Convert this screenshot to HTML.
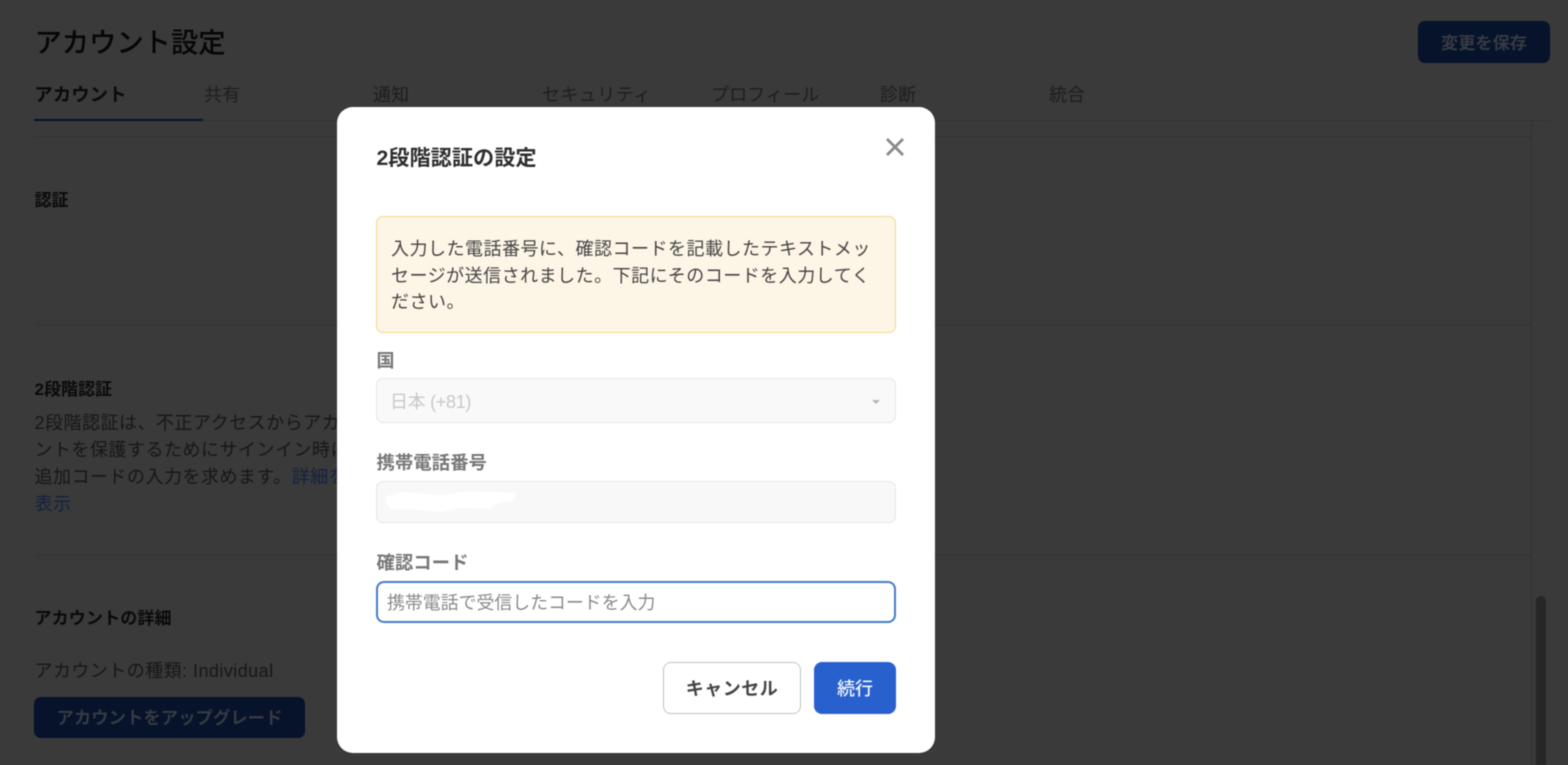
<!DOCTYPE html>
<html lang="ja"><head><meta charset="utf-8"><title>アカウント設定</title>
<style>
html,body{margin:0;padding:0;width:1568px;height:765px;overflow:hidden;background:#3a3a3a}
body{font-family:"Liberation Sans","Noto Sans CJK JP",sans-serif;position:relative}
#w{position:absolute;left:0;top:0;width:1568px;height:765px;filter:blur(.5px);overflow:hidden}
.a{position:absolute;white-space:nowrap}
.b{position:absolute}
.bg{color:#0a0a0a;font-weight:700}
.tab{font-size:18px;line-height:26px;top:82px;color:#1e1e1e;letter-spacing:.15px}
.ln{background:#333;height:1px;position:absolute}
.body{color:#171717;font-size:18px;letter-spacing:.5px}
</style></head><body><div id="w">
<div class="a" style="left:34.5px;top:23px;font-size:27.3px;line-height:40px;color:#060606;font-weight:500">アカウント設定</div>
<div class="b" style="left:1418px;top:21px;width:132px;height:42px;background:#06132b;border-radius:7px"></div>
<div class="a" style="left:1418px;top:22px;width:132px;text-align:center;font-size:17.2px;line-height:42px;color:#363a42;font-weight:700">変更を保存</div>
<div class="a tab" style="left:34.5px;color:#0a0a0a;font-weight:700;font-size:18.3px">アカウント</div>
<div class="a tab" style="left:204px">共有</div>
<div class="a tab" style="left:373px">通知</div>
<div class="a tab" style="left:542px;letter-spacing:.45px">セキュリティ</div>
<div class="a tab" style="left:711px">プロフィール</div>
<div class="a tab" style="left:880px">診断</div>
<div class="a tab" style="left:1049px">統合</div>
<div class="ln" style="left:35px;top:120px;width:1515px"></div>
<div class="b" style="left:34px;top:119px;width:169px;height:2px;background:#06132e"></div>
<div class="ln" style="left:35px;top:136px;width:1496px"></div>
<div class="b" style="left:1531px;top:121px;width:1px;height:644px;background:#343434"></div>
<div class="a bg" style="left:34.5px;top:189px;font-size:17px;line-height:24px">認証</div>
<div class="ln" style="left:35px;top:324px;width:1496px"></div>
<div class="a bg" style="left:34.5px;top:378px;font-size:17px;line-height:24px">2段階認証</div>
<div class="a body" style="left:34.5px;top:410px;line-height:27px">2段階認証は、不正アクセスからアカ<br>ントを保護するためにサインイン時に<br>追加コードの入力を求めます。<span style="color:#14223f">詳細を</span><br><span style="color:#14223f">表示</span></div>
<div class="ln" style="left:35px;top:555px;width:1496px"></div>
<div class="a bg" style="left:34.5px;top:607px;font-size:17px;line-height:24px;letter-spacing:.15px">アカウントの詳細</div>
<div class="a body" style="left:34.5px;top:658px;line-height:27px;letter-spacing:.45px">アカウントの種類: Individual</div>
<div class="b" style="left:34px;top:697px;width:271px;height:41px;background:#06132b;border-radius:7px"></div>
<div class="a" style="left:34px;top:698px;width:271px;text-align:center;font-size:17.4px;line-height:41px;color:#363a42;font-weight:700">アカウントをアップグレード</div>
<div class="b" style="left:1536px;top:596px;width:10px;height:175px;background:#272727;border-radius:5px"></div>

<div class="b" style="left:337px;top:107px;width:598px;height:646px;background:#fff;border-radius:16px"></div>
<div class="a" style="left:376.5px;top:145px;font-size:21.2px;line-height:28px;color:#2e2e2e;font-weight:700">2段階認証の設定</div>
<svg class="b" style="left:884px;top:136px" width="22" height="22" viewBox="0 0 22 22"><path d="M3 3L19 19M19 3L3 19" stroke="#8a8a8a" stroke-width="2.8" fill="none"/></svg>
<div class="b" style="left:376px;top:216px;width:518px;height:115px;background:#fdf5e6;border:1.5px solid #f3d98e;border-radius:7px;box-sizing:content-box"></div>
<div class="a" style="left:391px;top:236px;font-size:18px;line-height:26.5px;letter-spacing:.5px;color:#444">入力した電話番号に、確認コードを記載したテキストメッ<br>セージが送信されました。下記にそのコードを入力してく<br>ださい。</div>
<div class="a" style="left:376.5px;top:349px;font-size:18px;line-height:24px;color:#777;font-weight:700">国</div>
<div class="b" style="left:376px;top:378px;width:518px;height:43px;background:#f9f9f9;border:1px solid #e6e6e6;border-radius:7px"></div>
<div class="a" style="left:390px;top:389px;font-size:18px;line-height:26px;color:#c8c8c8;letter-spacing:-.3px">日本 (+81)</div>
<div class="b" style="left:872px;top:400px;width:0;height:0;border-left:4px solid transparent;border-right:4px solid transparent;border-top:4px solid #b5b5b5"></div>
<div class="a" style="left:376.5px;top:451px;font-size:18.4px;line-height:24px;color:#777;font-weight:700">携帯電話番号</div>
<div class="b" style="left:376px;top:481px;width:518px;height:40px;background:#f8f8f8;border:1px solid #e6e6e6;border-radius:7px"></div>
<svg class="b" style="left:380px;top:488px" width="140" height="30" viewBox="0 0 140 30"><path d="M7 8L24 4L60 7L90 3L136 5L134 13L118 15L110 21L80 20L60 24L30 21L10 21L6 14Z" fill="#fff"/></svg>
<div class="a" style="left:376.5px;top:551px;font-size:18.4px;line-height:24px;color:#777;font-weight:700">確認コード</div>
<div class="b" style="left:376px;top:581px;width:516px;height:38px;background:#fff;border:2px solid #467ac9;border-radius:8px"></div>
<div class="a" style="left:387px;top:590px;font-size:17.9px;line-height:26px;color:#8a8a8a">携帯電話で受信したコードを入力</div>
<div class="b" style="left:663px;top:662px;width:136px;height:50px;background:#fff;border:1.5px solid #c2c2c2;border-radius:8px;box-sizing:content-box"></div>
<div class="a" style="left:663px;top:663px;width:138px;text-align:center;font-size:18px;line-height:52px;color:#444;font-weight:700;letter-spacing:.5px">キャンセル</div>
<div class="b" style="left:814px;top:662px;width:82px;height:52px;background:#2860ce;border-radius:8px"></div>
<div class="a" style="left:814px;top:663px;width:82px;text-align:center;font-size:18px;line-height:52px;color:#f2f6fd;font-weight:500">続行</div>
</div></body></html>
